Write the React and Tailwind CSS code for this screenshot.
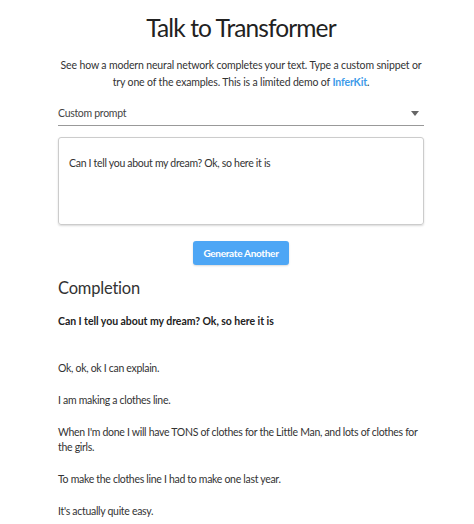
export default function App() {
  const font = { fontFamily: "Lato, 'Noto Sans', sans-serif" };
  return (
    <div className="min-h-[524px] bg-white text-[#333]" style={font}>
      <div className="ml-[58px] w-[366px] flex flex-col tracking-[-0.3px]">
        <h1 className="mt-[12px] h-[32px] text-center text-[24.5px] leading-[32px] text-[#222] tracking-[-0.9px]">
          Talk to Transformer
        </h1>
        <p className="mt-[12.5px] text-center text-[10.5px] leading-[17px] tracking-[-0.15px] text-[#333]">
          See how a modern neural network completes your text. Type a custom snippet or
          <br />
          try one of the examples. This is a limited demo of{" "}
          <span className="font-bold text-[#3d9be9]">InferKit</span>.
        </p>
        <div className="mt-[9.5px] flex h-[26px] items-end justify-between border-b border-[#999] pb-[4px]">
          <span className="text-[10.5px] leading-[15px] text-[#444]">Custom prompt</span>
          <svg width="8" height="5" viewBox="0 0 8 5" className="mb-[5px] mr-[5px]">
            <path d="M0 0 L8 0 L4 5 Z" fill="#666" />
          </svg>
        </div>
        <div className="mt-[11px] h-[88px] rounded-[3px] border border-[#ccc] px-[10px] pt-[10.5px] shadow-[0_1px_2px_rgba(0,0,0,0.15)]">
          <span className="text-[10.5px] leading-[15px] text-[#333]">Can I tell you about my dream? Ok, so here it is</span>
        </div>
        <div className="mt-[16px] flex justify-center">
          <button className="h-[24px] w-[96px] rounded-[3px] bg-[#4da6f5] text-[10px] font-bold text-white tracking-[-0.3px] shadow-[0_1px_2px_rgba(0,0,0,0.15)]">
            Generate Another
          </button>
        </div>
        <h2 className="mt-[12px] text-[16.5px] leading-[22px] text-[#333] tracking-[-0.2px]">Completion</h2>
        <p className="mt-[14.5px] text-[10.5px] font-bold leading-[15px] tracking-[-0.05px] text-[#222]">
          Can I tell you about my dream? Ok, so here it is
        </p>
        <div className="mt-[32px] flex flex-col gap-[17px] text-[10.5px] leading-[15px] text-[#333]">
          <p>Ok, ok, ok I can explain.</p>
          <p>I am making a clothes line.</p>
          <p>When I'm done I will have TONS of clothes for the Little Man, and lots of clothes for the girls.</p>
          <p>To make the clothes line I had to make one last year.</p>
          <p>It's actually quite easy.</p>
        </div>
      </div>
    </div>
  );
}
